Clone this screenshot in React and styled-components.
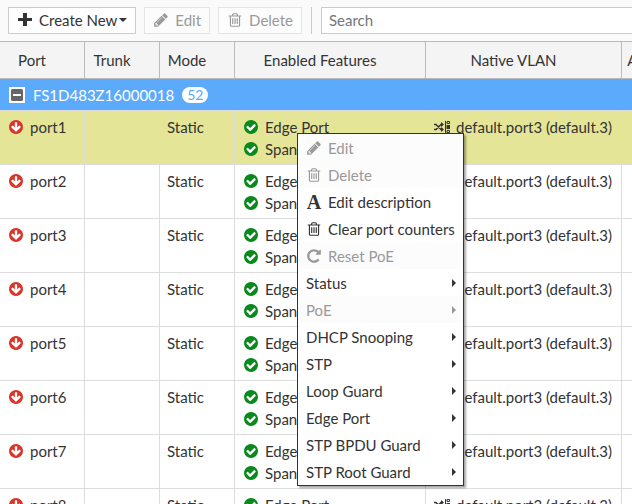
import React from 'react';
import styled, { createGlobalStyle } from 'styled-components';

const GlobalStyle = createGlobalStyle`
  * {
    box-sizing: border-box;
  }

  body {
    margin: 0;
    background: #fff;
    color: #333;
    font-family: Lato, sans-serif;
    font-size: 15px;
    line-height: 22px;
  }

  button, input {
    font: inherit;
    color: inherit;
  }
`;

const Page = styled.div`
  position: relative;
  height: 100vh;
  overflow: hidden;
`;

const Toolbar = styled.div`
  display: flex;
  align-items: center;
  gap: 8px;
  height: 41px;
  padding-left: 8px;
  background: #fafafa;
`;

const ToolButton = styled.button`
  display: flex;
  align-items: center;
  flex-shrink: 0;
  height: 27px;
  padding: 0 8px 2px;
  border: 1px solid #ccc;
  background: #fff;
  white-space: nowrap;

  svg:first-child {
    margin-right: 6px;
  }

  &:disabled {
    border-color: #e4e4e4;
    background: #fcfcfc;
    color: #999;
  }
`;

const Caret = styled.span`
  margin-left: 2px;
  border: 4px solid transparent;
  border-top-color: #333;
  border-bottom: 0;
`;

const Separator = styled.div`
  width: 1px;
  height: 27px;
  margin: 0 1px;
  background: #ccc;
`;

const Search = styled.input`
  flex: 1;
  min-width: 0;
  height: 27px;
  padding: 0 7px 2px;
  border: 1px solid #ccc;
  border-right: 0;
  background: #fff;

  &::placeholder {
    color: #757575;
    opacity: 1;
  }
`;

const Table = styled.table`
  width: 756px;
  table-layout: fixed;
  border-collapse: separate;
  border-spacing: 0;
`;

const Col = styled.col`
  width: ${(props) => props.$width}px;
`;

const HeadCell = styled.th`
  height: 38px;
  padding: 0 20px 1px 0;
  border: 1px solid #bbb;
  border-left: 0;
  background: #f4f4f4;
  font-weight: 400;
  white-space: nowrap;
`;

const GroupCell = styled.td`
  height: 32px;
  padding: 0 9px;
  border-bottom: 1px solid #ddd;
  background: #5caafb;
  color: #fff;
`;

const GroupLabel = styled.div`
  display: flex;
  align-items: center;
  gap: 8px;
`;

const Collapse = styled.button`
  display: flex;
  padding: 0;
  border: 0;
  background: none;
`;

const Badge = styled.span`
  padding: 0 5px;
  border-radius: 8px;
  background: #fff;
  color: #5caafb;
  font-size: 14px;
  line-height: 16px;
`;

const Row = styled.tr`
  background: ${(props) => (props.$selected ? '#e5e598' : '#fff')};
`;

const Cell = styled.td`
  height: 54px;
  padding: 5px 7px 4px ${(props) => props.$indent || 7}px;
  border-right: 1px solid #ddd;
  border-bottom: 1px solid #ddd;
  vertical-align: top;
  white-space: nowrap;
`;

const Entry = styled.div`
  display: flex;
  align-items: center;
  gap: ${(props) => props.$gap || 6}px;
`;

const Menu = styled.div`
  position: absolute;
  top: 133px;
  left: 297px;
  width: 167px;
  border: 1px solid #333;
  background: #fff;
  box-shadow: 2px 2px 2px rgba(0, 0, 0, 0.35);
`;

const MenuItem = styled.button`
  display: flex;
  align-items: center;
  width: 100%;
  height: 27px;
  padding: 0 7px 0 8px;
  border: 0;
  background: #fff;
  text-align: left;
  white-space: nowrap;

  svg {
    margin-right: 6px;
  }

  &:disabled {
    background: #fcfcfc;
    color: #999;
  }
`;

const Letter = styled.span`
  width: 16px;
  margin-right: 6px;
  font-family: "Liberation Serif", serif;
  font-size: 20px;
  font-weight: 700;
  text-align: center;
`;

const Arrow = styled.span`
  margin-left: auto;
  border: 4px solid transparent;
  border-left-color: currentColor;
  border-right: 0;
`;

const DISC = 'M1664 896q0 209-103 385.5t-279.5 279.5-385.5 103-385.5-103-279.5-279.5-103-385.5 103-385.5 279.5-279.5 385.5-103 385.5 103 279.5 279.5 103 385.5z';

const PATHS = {
  pencil: 'M491 1536l91-91-235-235-91 91v107h128v128h107zm523-928q0-22-22-22-10 0-17 7l-542 542q-7 7-7 17 0 22 22 22 10 0 17-7l542-542q7-7 7-17zm-54-192l416 416-832 832h-416v-416zm683 96q0 53-37 90l-166 166-416-416 166-165q36-38 90-38 53 0 91 38l235 234q37 39 37 91z',
  trash: 'M704 736v576q0 14-9 23t-23 9h-64q-14 0-23-9t-9-23v-576q0-14 9-23t23-9h64q14 0 23 9t9 23zm256 0v576q0 14-9 23t-23 9h-64q-14 0-23-9t-9-23v-576q0-14 9-23t23-9h64q14 0 23 9t9 23zm256 0v576q0 14-9 23t-23 9h-64q-14 0-23-9t-9-23v-576q0-14 9-23t23-9h64q14 0 23 9t9 23zm128 724v-948h-896v948q0 22 7 40.5t14.5 27 10.5 8.5h832q3 0 10.5-8.5t14.5-27 7-40.5zm-672-1076h448l-48-117q-7-9-17-11h-317q-10 2-17 11zm928 32v64q0 14-9 23t-23 9h-96v948q0 83-47 143.5t-113 60.5h-832q-66 0-113-58.5t-47-141.5v-952h-96q-14 0-23-9t-9-23v-64q0-14 9-23t23-9h309l70-167q15-37 54-63t79-26h320q40 0 79 26t54 63l70 167h309q14 0 23 9t9 23z',
  repeat: 'M1664 256v448q0 26-19 45t-45 19h-448q-42 0-59-40-17-39 14-69l138-138q-148-137-349-137-104 0-198.5 40.5t-163.5 109.5-109.5 163.5-40.5 198.5 40.5 198.5 109.5 163.5 163.5 109.5 198.5 40.5q119 0 225-52t179-147q7-10 23-12 15 0 25 9l137 138q9 8 9.5 20.5t-7.5 22.5q-109 132-264 204.5t-327 72.5q-156 0-298-61t-245-164-164-245-61-298 61-298 164-245 245-164 298-61q147 0 284.5 55.5t244.5 156.5l130-129q29-31 70-14 39 17 39 59z',
  check: 'M1412 734q0-28-18-46l-91-90q-19-19-45-19t-45 19l-408 407-226-226q-19-19-45-19t-45 19l-91 90q-18 18-18 46 0 27 18 45l362 362q19 19 45 19 27 0 46-19l543-543q18-18 18-45z',
  down: 'M1412 897q0-27-18-45l-91-91q-18-18-45-18t-45 18l-189 189v-502q0-26-19-45t-45-19h-128q-26 0-45 19t-19 45v502l-189-189q-19-19-45-19t-45 19l-91 91q-18 18-18 45t18 45l362 362 91 91q18 18 45 18t45-18l91-91 362-362q18-18 18-45z',
};

const Glyph = ({ name }) => (
  <svg width="16" height="16" viewBox="0 0 1792 1792" fill="currentColor" aria-hidden="true">
    <path d={PATHS[name]} />
  </svg>
);

const StatusIcon = ({ name, color }) => (
  <svg width="14" height="14" viewBox="128 128 1536 1536" aria-hidden="true">
    <path d={DISC} fill={color} />
    <path d={PATHS[name]} fill="#fff" />
  </svg>
);

const PlusIcon = () => (
  <svg width="16" height="16" viewBox="0 0 16 16" fill="#333" aria-hidden="true">
    <path d="M6 1h4v5h5v3h-5v5H6V9H1V6h5z" />
  </svg>
);

const MinusIcon = () => (
  <svg width="16" height="16" viewBox="0 0 16 16" aria-hidden="true">
    <rect width="16" height="16" fill="#fff" />
    <rect x="2" y="2" width="12" height="12" rx="1.500" fill="#666" />
    <rect x="4" y="7" width="8" height="2" fill="#fff" />
  </svg>
);

const VlanIcon = () => (
  <svg width="16" height="14" viewBox="0 0 16 14" fill="none" stroke="#333" aria-hidden="true">
    <path d="M0 4.500h2l5 5h1.500M0 9.500h2l5-5h1.500" strokeWidth="1.500" />
    <path d="M7 2l3 2.500L7 7zM7 7l3 2.500L7 12z" fill="#333" stroke="none" />
    <path d="M11.500 1v12" />
    <path d="M13 1.500h2.500v2H13zM13 10.500h2.500v2H13z" />
    <rect x="12.500" y="5" width="3.500" height="4" fill="#333" stroke="none" />
  </svg>
);

const ports = ['port1', 'port2', 'port3', 'port4', 'port5', 'port6', 'port7', 'port8'];
const columns = ['Port', 'Trunk', 'Mode', 'Enabled Features', 'Native VLAN', 'Allowed VLANs'];
const widths = [85, 75, 75, 191, 196, 134];
const features = ['Edge Port', 'Spanning Tree Protocol'];

const menuItems = [
  { label: 'Edit', icon: 'pencil', disabled: true },
  { label: 'Delete', icon: 'trash', disabled: true },
  { label: 'Edit description', letter: 'A' },
  { label: 'Clear port counters', icon: 'trash' },
  { label: 'Reset PoE', icon: 'repeat', disabled: true },
  { label: 'Status', sub: true },
  { label: 'PoE', sub: true, disabled: true },
  { label: 'DHCP Snooping', sub: true },
  { label: 'STP', sub: true },
  { label: 'Loop Guard', sub: true },
  { label: 'Edge Port', sub: true },
  { label: 'STP BPDU Guard', sub: true },
  { label: 'STP Root Guard', sub: true },
];

const PortRow = ({ port, selected }) => (
  <Row $selected={selected}>
    <Cell $indent={9}>
      <Entry $gap={7}>
        <StatusIcon name="down" color="#d9362b" />
        {port}
      </Entry>
    </Cell>
    <Cell />
    <Cell>Static</Cell>
    <Cell $indent={9}>
      {features.map((feature) => (
        <Entry $gap={7} key={feature}>
          <StatusIcon name="check" color="#0a8a1c" />
          {feature}
        </Entry>
      ))}
    </Cell>
    <Cell $indent={8}>
      <Entry>
        <VlanIcon />
        default.port3 (default.3)
      </Entry>
    </Cell>
    <Cell />
  </Row>
);

const App = () => (
  <Page>
    <GlobalStyle />

    <Toolbar>
      <ToolButton type="button">
        <PlusIcon />
        Create New
        <Caret />
      </ToolButton>
      <ToolButton type="button" disabled>
        <Glyph name="pencil" />
        Edit
      </ToolButton>
      <ToolButton type="button" disabled>
        <Glyph name="trash" />
        Delete
      </ToolButton>
      <Separator />
      <Search type="text" placeholder="Search" aria-label="Search" />
    </Toolbar>

    <Table>
      <colgroup>
        {widths.map((width, i) => (
          <Col $width={width} key={columns[i]} />
        ))}
      </colgroup>
      <thead>
        <tr>
          {columns.map((name) => (
            <HeadCell key={name}>{name}</HeadCell>
          ))}
        </tr>
      </thead>
      <tbody>
        <tr>
          <GroupCell colSpan={6}>
            <GroupLabel>
              <Collapse type="button" aria-label="Collapse group">
                <MinusIcon />
              </Collapse>
              FS1D483Z16000018
              <Badge>52</Badge>
            </GroupLabel>
          </GroupCell>
        </tr>
        {ports.map((port, i) => (
          <PortRow port={port} selected={i === 0} key={port} />
        ))}
      </tbody>
    </Table>

    <Menu role="menu">
      {menuItems.map((item) => (
        <MenuItem type="button" role="menuitem" disabled={item.disabled} key={item.label}>
          {item.icon && <Glyph name={item.icon} />}
          {item.letter && <Letter aria-hidden="true">{item.letter}</Letter>}
          {item.label}
          {item.sub && <Arrow />}
        </MenuItem>
      ))}
    </Menu>
  </Page>
);

export default App;
